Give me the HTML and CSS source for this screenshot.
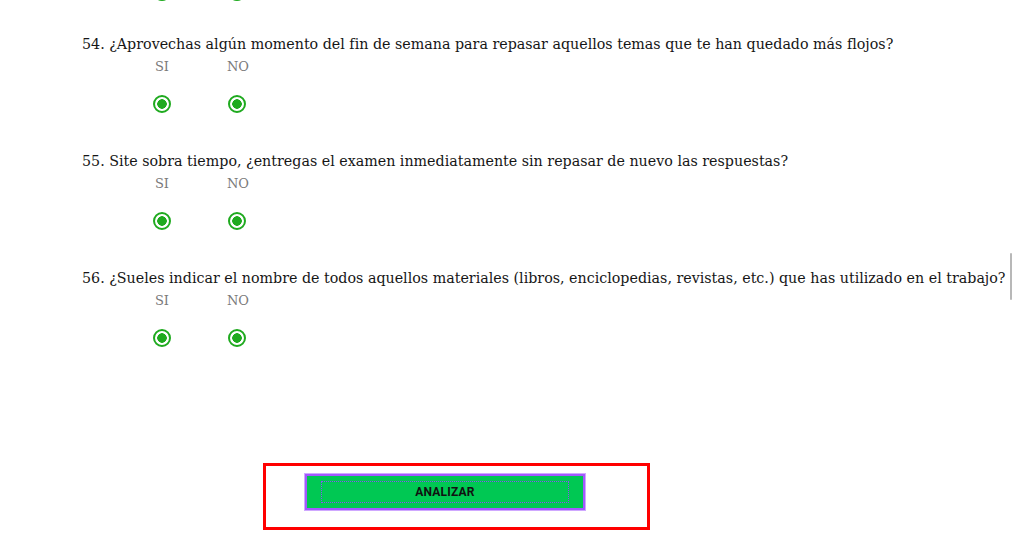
FILE: index.html
```html
<!DOCTYPE html>
<html lang="es">
<head>
<meta charset="utf-8">
<title>Cuestionario</title>
<link rel="stylesheet" href="styles.css">
</head>
<body>
<div class="page">
  <div class="q q-partial">
    <div class="radios">
      <span class="radio"></span>
      <span class="radio"></span>
    </div>
  </div>

  <div class="q">
    <p class="q-text">54. ¿Aprovechas algún momento del fin de semana para repasar aquellos temas que te han quedado más flojos?</p>
    <div class="labels"><span>SI</span><span>NO</span></div>
    <div class="radios"><span class="radio"></span><span class="radio"></span></div>
  </div>

  <div class="q">
    <p class="q-text">55. Site sobra tiempo, ¿entregas el examen inmediatamente sin repasar de nuevo las respuestas?</p>
    <div class="labels"><span>SI</span><span>NO</span></div>
    <div class="radios"><span class="radio"></span><span class="radio"></span></div>
  </div>

  <div class="q">
    <p class="q-text">56. ¿Sueles indicar el nombre de todos aquellos materiales (libros, enciclopedias, revistas, etc.) que has utilizado en el trabajo?</p>
    <div class="labels"><span>SI</span><span>NO</span></div>
    <div class="radios"><span class="radio"></span><span class="radio"></span></div>
  </div>

  <div class="submit-box">
    <button class="btn"><span class="btn-focus">ANALIZAR</span></button>
  </div>
</div>
<div class="scroll-thumb"></div>
</body>
</html>
```

FILE: styles.css
```css
html, body {
  margin: 0;
  padding: 0;
  background: #ffffff;
  overflow: hidden;
}

body {
  width: 1023px;
  height: 554px;
  position: relative;
  font-family: "DejaVu Serif", "Liberation Serif", serif;
  color: #161616;
}

.page {
  padding-left: 82px;
  padding-top: 1px;
}

.q {
  margin-bottom: 37px;
}

.q-partial {
  margin-top: -18px;
  margin-bottom: 32px;
}

.q-partial .radios {
  margin-top: 0;
}

.q-text {
  margin: 0;
  font-size: 14.25px;
  line-height: 22px;
  white-space: nowrap;
}

.labels,
.radios {
  display: flex;
  gap: 35px;
  margin-left: 60px;
}

.labels {
  margin-top: 2px;
}

.labels span {
  width: 40px;
  text-align: center;
  font-size: 13px;
  line-height: 20px;
  color: #7a7a7a;
}

.labels span + span {
  margin-left: 1px;
}

.radios {
  margin-top: 18px;
  height: 18px;
}

.radio {
  width: 40px;
  height: 18px;
  display: flex;
  justify-content: center;
  align-items: center;
}

.radio::before {
  content: "";
  box-sizing: border-box;
  width: 18px;
  height: 18px;
  border: 2px solid #1faa1f;
  border-radius: 50%;
  background: radial-gradient(circle, #1faa1f 0 4.5px, #ffffff 5px);
}

.submit-box {
  margin-top: 116px;
  margin-left: 181px;
  width: 342px;
  height: 53px;
  border: 3px solid #ff0000;
  padding-top: 8px;
  padding-left: 39px;
  box-sizing: content-box;
}

.btn {
  box-sizing: border-box;
  width: 280px;
  height: 36px;
  padding: 5px 14px;
  margin: 0;
  background: #00c853;
  border: 2px solid #a259ff;
  box-shadow: 0 0 0 1px #cfa8ff;
  font-family: Roboto, "Liberation Sans", sans-serif;
  font-weight: 700;
  font-size: 12px;
  color: #111111;
  display: flex;
}

.btn-focus {
  flex: 1;
  border: 1px dotted #8a4ff5;
  display: flex;
  align-items: center;
  justify-content: center;
  letter-spacing: 0.2px;
}

.scroll-thumb {
  position: absolute;
  left: 1010px;
  top: 253px;
  width: 2px;
  height: 47px;
  background: #b8b8b8;
  border-radius: 1px;
}
```
